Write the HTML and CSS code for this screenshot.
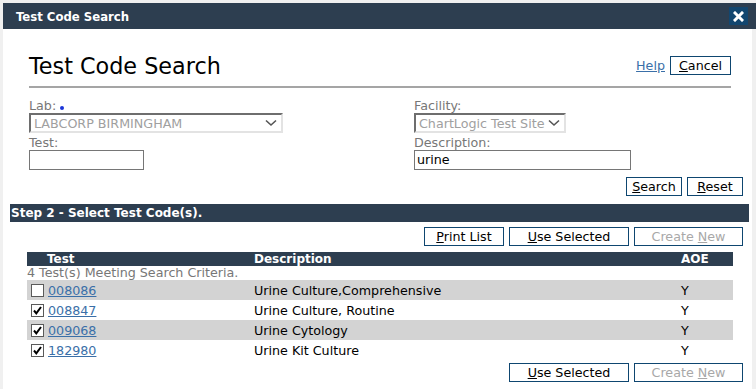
FILE: index.html
```html
<!DOCTYPE html>
<html>
<head>
<meta charset="utf-8">
<link rel="stylesheet" href="styles.css">
</head>
<body>
<div class="titlebar">
  <span class="titlebar-text">Test Code Search</span>
  <span class="close-btn"><svg width="11" height="11" viewBox="0 0 11 11"><path d="M2 2 L9 9 M9 2 L2 9" stroke="#fff" stroke-width="3" stroke-linecap="square"/></svg></span>
</div>
<div class="content">
  <div class="page-head">
    <h1 class="page-title">Test Code Search</h1>
    <div class="head-actions">
      <a class="link" href="#">Help</a>
      <span class="btn w-cancel"><span><u>C</u>ancel</span></span>
    </div>
  </div>
  <div class="form-grid">
    <div class="field">
      <div class="label">Lab: <span class="req-dot"></span></div>
      <div class="select lab-select"><span>LABCORP BIRMINGHAM</span><svg class="chev" width="12" height="8" viewBox="0 0 12 8"><path d="M1 1.5 L6 6 L11 1.5" fill="none" stroke="#555" stroke-width="1.6"/></svg></div>
    </div>
    <div class="field">
      <div class="label">Facility:</div>
      <div class="select fac-select"><span>ChartLogic Test Site</span><svg class="chev" width="12" height="8" viewBox="0 0 12 8"><path d="M1 1.5 L6 6 L11 1.5" fill="none" stroke="#555" stroke-width="1.6"/></svg></div>
    </div>
    <div class="field">
      <div class="label">Test:</div>
      <div class="input test-input"></div>
    </div>
    <div class="field">
      <div class="label">Description:</div>
      <div class="input desc-input">urine</div>
    </div>
  </div>
  <div class="btn-row search-row">
    <span class="btn w-small"><span><u>S</u>earch</span></span>
    <span class="btn w-small"><span><u>R</u>eset</span></span>
  </div>
  <div class="step-bar">Step 2 - Select Test Code(s).</div>
  <div class="btn-row list-row">
    <span class="btn w-print"><span><u>P</u>rint List</span></span>
    <span class="btn w-use"><span><u>U</u>se Selected</span></span>
    <span class="btn w-new disabled"><span>Create <u>N</u>ew</span></span>
  </div>
  <div class="results">
    <div class="thead">
      <span class="c-test">Test</span>
      <span class="c-desc">Description</span>
      <span class="c-aoe">AOE</span>
    </div>
    <div class="count">4 Test(s) Meeting Search Criteria.</div>
    <div class="row alt">
      <span class="c-test"><span class="cb"></span><a class="link" href="#">008086</a></span>
      <span class="c-desc">Urine Culture,Comprehensive</span>
      <span class="c-aoe">Y</span>
    </div>
    <div class="row">
      <span class="c-test"><span class="cb checked"><svg width="11" height="11" viewBox="0 0 11 11"><path d="M2 5.5 L4.3 8.3 L9 2" fill="none" stroke="#000" stroke-width="2"/></svg></span><a class="link" href="#">008847</a></span>
      <span class="c-desc">Urine Culture, Routine</span>
      <span class="c-aoe">Y</span>
    </div>
    <div class="row alt">
      <span class="c-test"><span class="cb checked"><svg width="11" height="11" viewBox="0 0 11 11"><path d="M2 5.5 L4.3 8.3 L9 2" fill="none" stroke="#000" stroke-width="2"/></svg></span><a class="link" href="#">009068</a></span>
      <span class="c-desc">Urine Cytology</span>
      <span class="c-aoe">Y</span>
    </div>
    <div class="row">
      <span class="c-test"><span class="cb checked"><svg width="11" height="11" viewBox="0 0 11 11"><path d="M2 5.5 L4.3 8.3 L9 2" fill="none" stroke="#000" stroke-width="2"/></svg></span><a class="link" href="#">182980</a></span>
      <span class="c-desc">Urine Kit Culture</span>
      <span class="c-aoe">Y</span>
    </div>
  </div>
  <div class="btn-row bottom-row">
    <span class="btn w-use"><span><u>U</u>se Selected</span></span>
    <span class="btn w-new disabled"><span>Create <u>N</u>ew</span></span>
  </div>
</div>
</body>
</html>
```
FILE: styles.css
```css
html, body {
  margin: 0;
  padding: 0;
}
body {
  background: #f0f0f0;
  font-family: "DejaVu Sans", Verdana, sans-serif;
  font-size: 12.7px;
  color: #000;
  padding: 3px 0 0 3px;
  height: 389px;
  box-sizing: border-box;
  overflow: hidden;
}
.titlebar {
  background: #2d3e50;
  height: 26px;
  display: flex;
  align-items: center;
  justify-content: space-between;
  padding: 0 8px 0 13px;
}
.titlebar-text {
  color: #fff;
  font-family: "DejaVu Sans Condensed", "DejaVu Sans", sans-serif;
  font-weight: bold;
  font-size: 13px;
}
.close-btn {
  width: 19px;
  height: 18px;
  background: #12466f;
  display: flex;
  align-items: center;
  justify-content: center;
}
.content {
  width: 749px;
  background: #fff;
  height: 360px;
  box-sizing: border-box;
  padding: 0 3px 0 7px;
}
.page-head {
  display: flex;
  justify-content: space-between;
  align-items: flex-end;
  margin: 0 18px 0 19px;
  padding: 24px 0 7px;
  border-bottom: 2px solid #a5a5a5;
}
.page-title {
  margin: 0;
  font-weight: normal;
  font-size: 22.3px;
  line-height: 26px;
}
.head-actions {
  display: flex;
  align-items: center;
  gap: 5px;
  margin-bottom: 4px;
}
.link {
  color: #3a6fa8;
  text-decoration: underline;
}
.btn {
  display: inline-flex;
  align-items: center;
  justify-content: center;
  height: 19px;
  box-sizing: border-box;
  border: 1px solid #0e4670;
  padding: 0 4px;
  background: #fff;
  font-size: 12.7px;
}
.btn.disabled {
  color: #a8a8a8;
}
.w-cancel { width: 61px; }
.w-small { width: 56px; }
.form-grid {
  display: grid;
  grid-template-columns: 385px 1fr;
  padding-left: 19px;
  margin-top: 11px;
  row-gap: 3px;
}
.label {
  color: #777;
  line-height: 14px;
  height: 14px;
  display: flex;
  align-items: center;
  gap: 4px;
}
.req-dot {
  width: 4px;
  height: 4px;
  border-radius: 50%;
  background: #1a35d8;
  margin-top: 4px;
}
.select {
  height: 20px;
  box-sizing: border-box;
  border-top: 2px solid #6e6e6e;
  border-left: 2px solid #6e6e6e;
  border-right: 2px solid #e3e3e3;
  border-bottom: 2px solid #e3e3e3;
  display: flex;
  align-items: center;
  justify-content: space-between;
  padding: 0 4px 0 3px;
  color: #a0a0a0;
  background: #fff;
}
.lab-select { width: 254px; }
.fac-select { width: 152px; }
.chev { flex: none; }
.input {
  height: 20px;
  box-sizing: border-box;
  border: 1px solid #767676;
  padding: 0 2px;
  line-height: 18px;
}
.test-input { width: 115px; }
.desc-input { width: 217px; }
.btn-row {
  display: flex;
  justify-content: flex-end;
  gap: 5px;
  margin-right: 6px;
}
.search-row {
  margin-top: 7px;
}
.step-bar {
  background: #2d3e50;
  color: #fff;
  font-weight: bold;
  font-size: 12px;
  height: 18px;
  line-height: 18px;
  padding-left: 1px;
  margin-top: 8px;
}
.list-row {
  margin-top: 5px;
}
.w-print { width: 80px; }
.w-use { width: 120px; }
.w-new { width: 109px; }
.results {
  margin: 6px 16px 0 17px;
}
.thead {
  background: #2d3e50;
  color: #fff;
  font-weight: bold;
  font-size: 12px;
  height: 14px;
  line-height: 14px;
  display: flex;
}
.c-test {
  width: 227px;
  display: flex;
  align-items: center;
}
.thead .c-test { padding-left: 20px; width: 207px; }
.c-desc { width: 427px; }
.c-aoe { flex: 1; }
.count {
  color: #777;
  height: 14px;
  line-height: 14px;
}
.row {
  height: 20px;
  display: flex;
  align-items: center;
}
.row.alt { background: #d3d3d3; }
.cb {
  width: 13px;
  height: 13px;
  box-sizing: border-box;
  border: 1px solid #5a5a5a;
  background: #fff;
  margin: 0 4px 0 4px;
  display: flex;
  align-items: center;
  justify-content: center;
}
.bottom-row {
  margin-top: 3px;
}
```
